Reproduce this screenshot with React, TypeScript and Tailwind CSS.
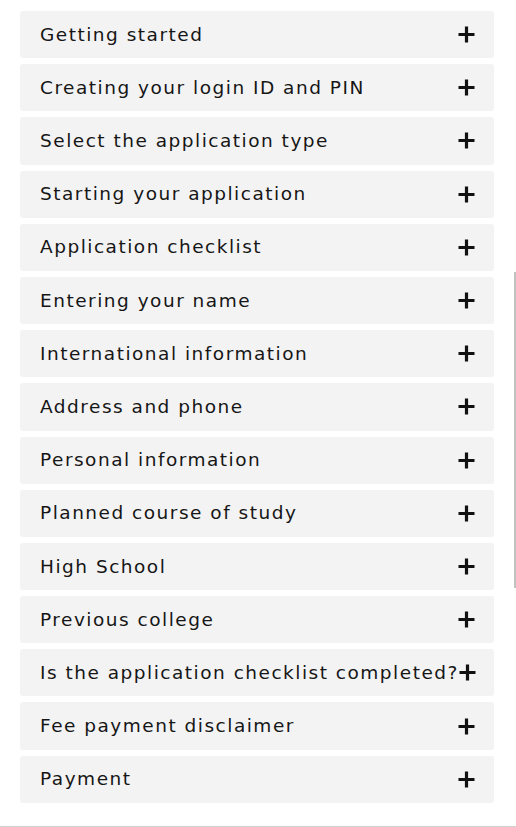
const items = [
  'Getting started',
  'Creating your login ID and PIN',
  'Select the application type',
  'Starting your application',
  'Application checklist',
  'Entering your name',
  'International information',
  'Address and phone',
  'Personal information',
  'Planned course of study',
  'High School',
  'Previous college',
  'Is the application checklist completed?',
  'Fee payment disclaimer',
  'Payment',
];

const PlusIcon = () => (
  <svg width="17" height="17" viewBox="0 0 17 17" className="shrink-0">
    <path d="M8.5 0.5v16M0.5 8.5h16" stroke="#111" strokeWidth="3.2" />
  </svg>
);

export default function App() {
  return (
    <div className="relative h-[827px] w-full overflow-hidden bg-white font-['DejaVu_Sans',sans-serif]">
      {/* Accordion list */}
      <div className="ml-[20px] flex w-[474px] flex-col gap-[6px] pt-[11px]">
        {items.map((label) => (
          <button
            key={label}
            className="flex h-[47.2px] items-center justify-between rounded-[3px] bg-[#f3f3f3] pl-[20px] pr-[19px] text-left"
          >
            <span className="whitespace-nowrap text-[18.5px] tracking-[1.5px] text-[#161616]">{label}</span>
            <PlusIcon />
          </button>
        ))}
      </div>

      {/* Scroll indicator */}
      <div className="absolute right-0 top-[272px] h-[316px] w-[2px] bg-[#c2c2c2]" />

      {/* Bottom rule */}
      <div className="absolute bottom-0 left-0 h-px w-full bg-[#cfcfcf]" />
    </div>
  );
}
